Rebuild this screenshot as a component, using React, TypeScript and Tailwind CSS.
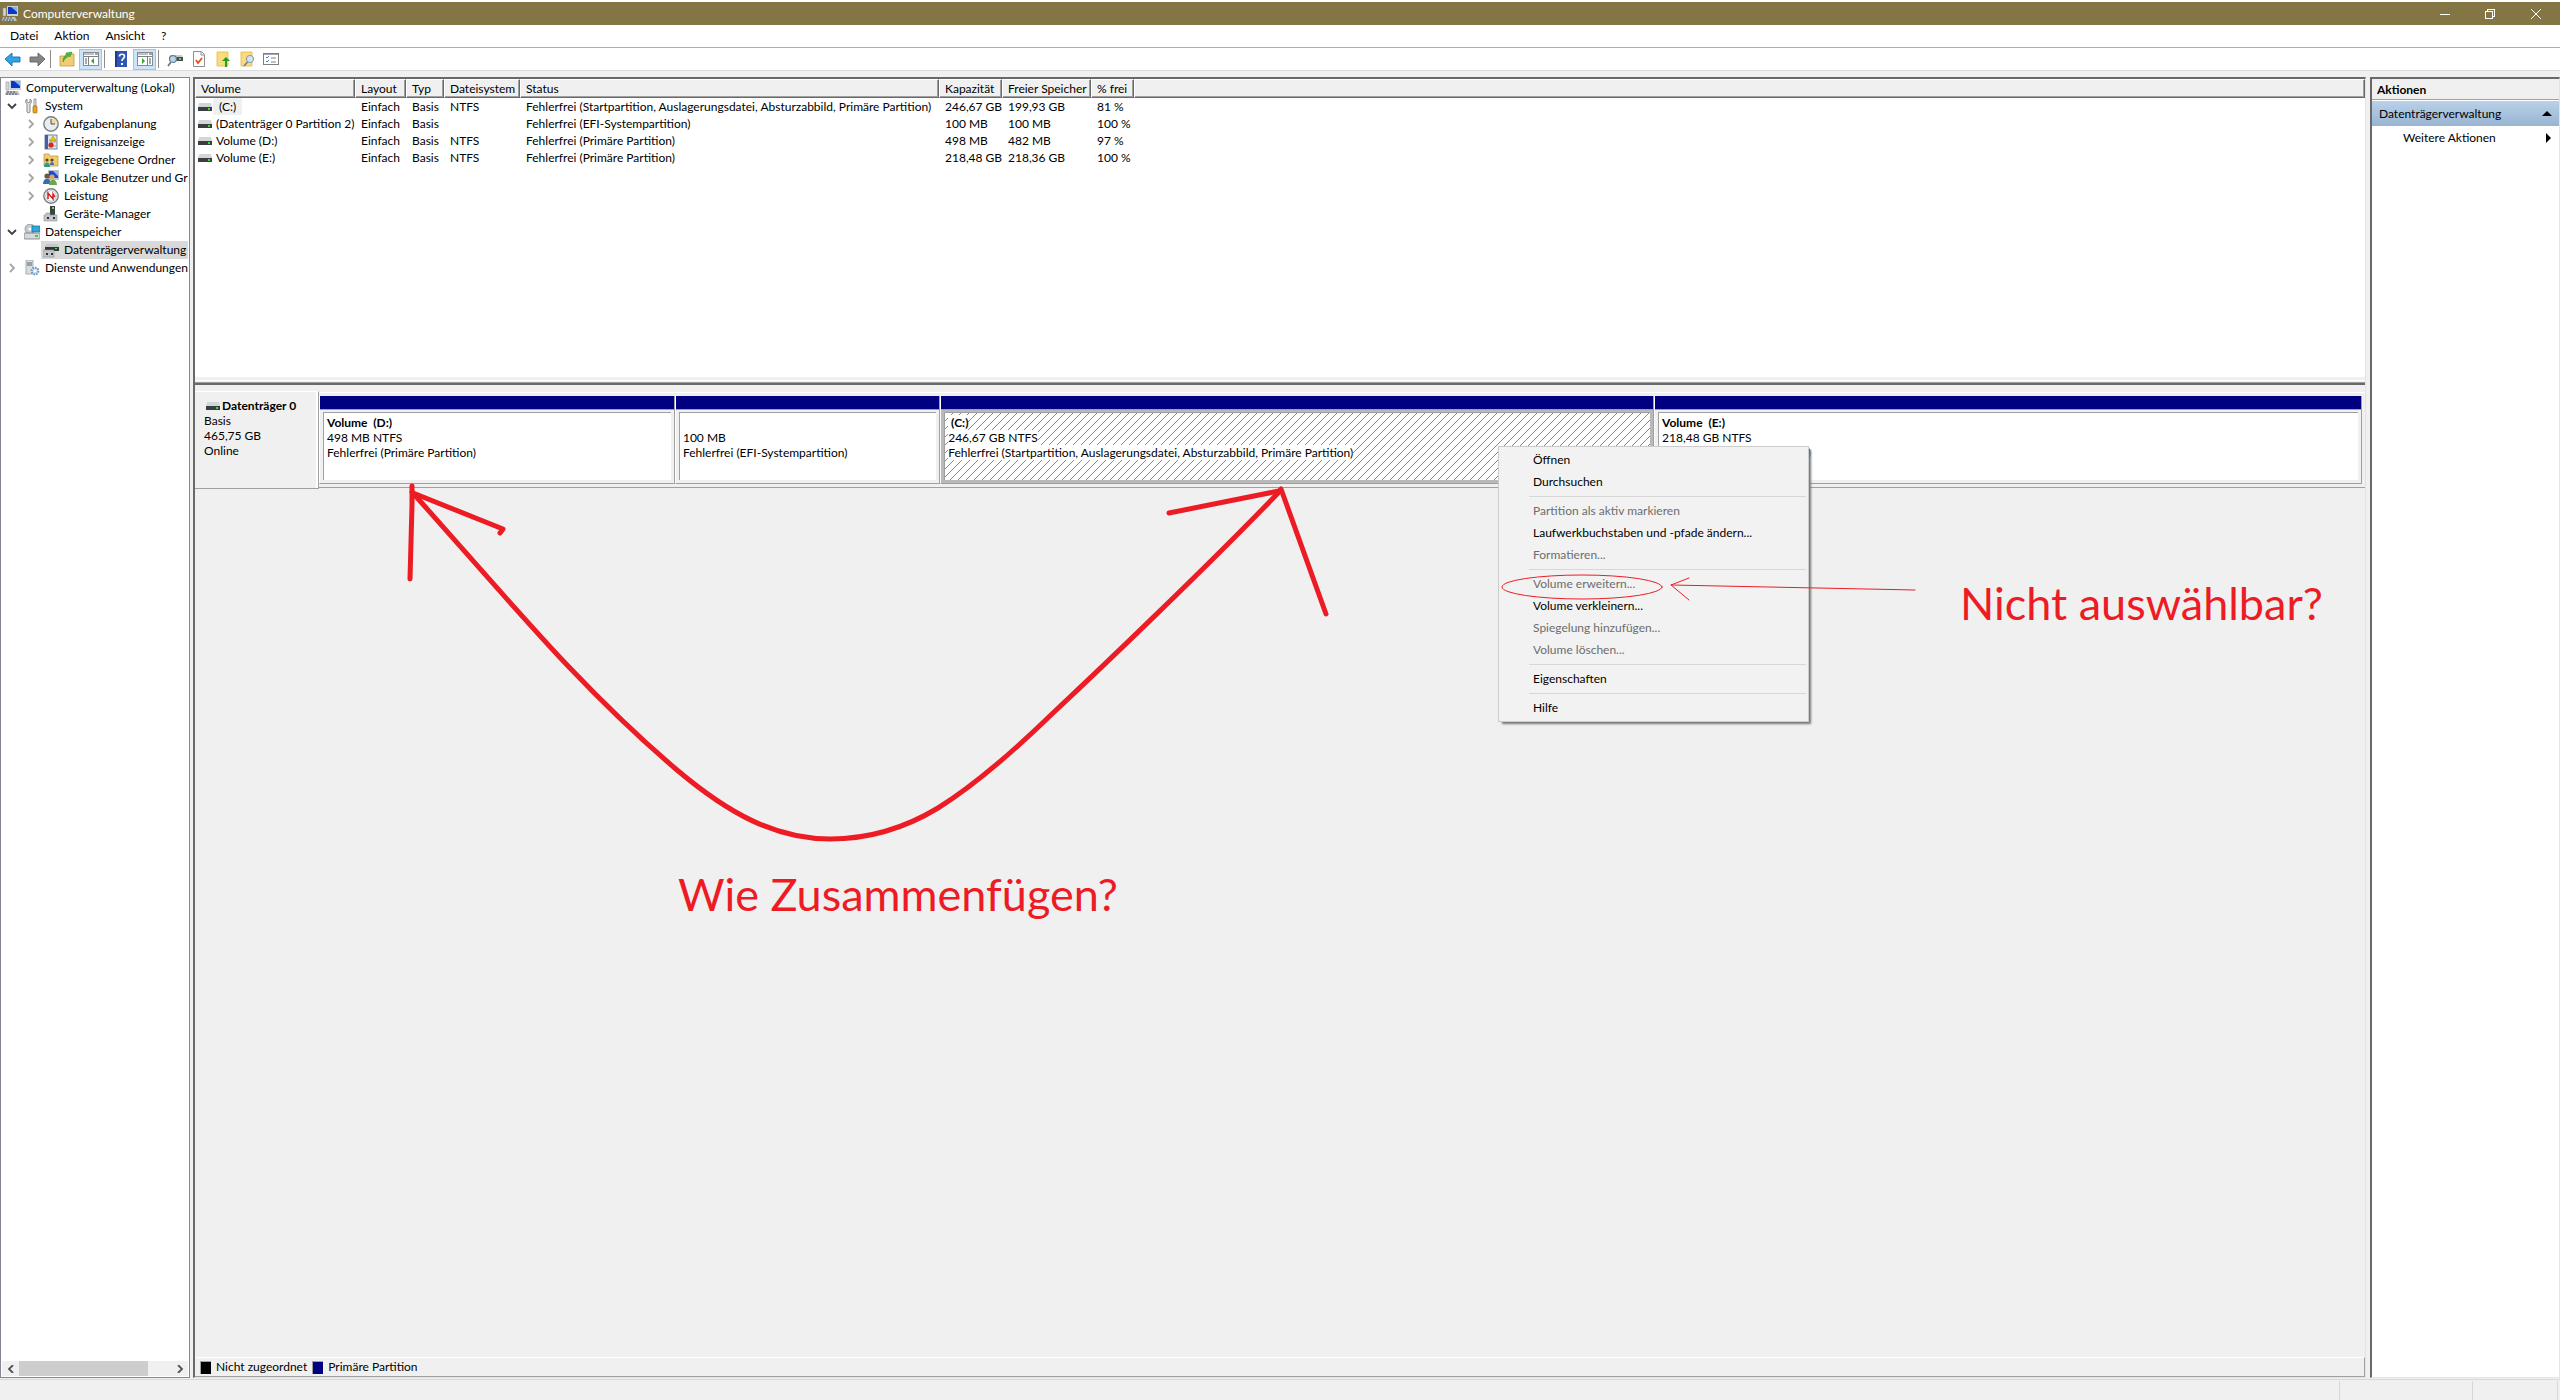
import React from "react";

type IconName =
  | "computer"
  | "tools"
  | "clock"
  | "events"
  | "share"
  | "users"
  | "perf"
  | "device"
  | "storage"
  | "disk"
  | "services";

interface TreeItem {
  label: string;
  icon: IconName;
  level: number;
  state?: "open" | "closed";
  selected?: boolean;
}

interface Volume {
  name: string;
  fs: string;
  status: string;
  capacity: string;
  free: string;
  percent: string;
  selected?: boolean;
}

interface Partition {
  name: string;
  size: string;
  status: string;
  grow: number;
  selected?: boolean;
}

const treeItems: TreeItem[] = [
  { label: "Computerverwaltung (Lokal)", icon: "computer", level: 0 },
  { label: "System", icon: "tools", level: 1, state: "open" },
  { label: "Aufgabenplanung", icon: "clock", level: 2, state: "closed" },
  { label: "Ereignisanzeige", icon: "events", level: 2, state: "closed" },
  { label: "Freigegebene Ordner", icon: "share", level: 2, state: "closed" },
  { label: "Lokale Benutzer und Gruppen", icon: "users", level: 2, state: "closed" },
  { label: "Leistung", icon: "perf", level: 2, state: "closed" },
  { label: "Geräte-Manager", icon: "device", level: 2 },
  { label: "Datenspeicher", icon: "storage", level: 1, state: "open" },
  { label: "Datenträgerverwaltung", icon: "disk", level: 2, selected: true },
  { label: "Dienste und Anwendungen", icon: "services", level: 1, state: "closed" },
];

const volumes: Volume[] = [
  {
    name: "(C:)",
    fs: "NTFS",
    status: "Fehlerfrei (Startpartition, Auslagerungsdatei, Absturzabbild, Primäre Partition)",
    capacity: "246,67 GB",
    free: "199,93 GB",
    percent: "81 %",
    selected: true,
  },
  {
    name: "(Datenträger 0 Partition 2)",
    fs: "",
    status: "Fehlerfrei (EFI-Systempartition)",
    capacity: "100 MB",
    free: "100 MB",
    percent: "100 %",
  },
  {
    name: "Volume (D:)",
    fs: "NTFS",
    status: "Fehlerfrei (Primäre Partition)",
    capacity: "498 MB",
    free: "482 MB",
    percent: "97 %",
  },
  {
    name: "Volume (E:)",
    fs: "NTFS",
    status: "Fehlerfrei (Primäre Partition)",
    capacity: "218,48 GB",
    free: "218,36 GB",
    percent: "100 %",
  },
];

const partitions: Partition[] = [
  { name: "Volume  (D:)", size: "498 MB NTFS", status: "Fehlerfrei (Primäre Partition)", grow: 355 },
  { name: "", size: "100 MB", status: "Fehlerfrei (EFI-Systempartition)", grow: 264 },
  {
    name: " (C:)",
    size: "246,67 GB NTFS",
    status: "Fehlerfrei (Startpartition, Auslagerungsdatei, Absturzabbild, Primäre Partition)",
    grow: 714,
    selected: true,
  },
  { name: "Volume  (E:)", size: "218,48 GB NTFS", status: "Fehlerfrei (Primäre Partition)", grow: 708 },
];

const menuGroups: { label: string; disabled?: boolean }[][] = [
  [{ label: "Öffnen" }, { label: "Durchsuchen" }],
  [
    { label: "Partition als aktiv markieren", disabled: true },
    { label: "Laufwerkbuchstaben und -pfade ändern..." },
    { label: "Formatieren...", disabled: true },
  ],
  [
    { label: "Volume erweitern...", disabled: true },
    { label: "Volume verkleinern..." },
    { label: "Spiegelung hinzufügen...", disabled: true },
    { label: "Volume löschen...", disabled: true },
  ],
  [{ label: "Eigenschaften" }],
  [{ label: "Hilfe" }],
];

const columns = [
  { label: "Volume", width: "w-[160px]" },
  { label: "Layout", width: "w-[51px]" },
  { label: "Typ", width: "w-[38px]" },
  { label: "Dateisystem", width: "w-[76px]" },
  { label: "Status", width: "w-[419px]" },
  { label: "Kapazität", width: "w-[63px]" },
  { label: "Freier Speicher", width: "w-[89px]" },
  { label: "% frei", width: "w-[43px]" },
  { label: "", width: "" },
];

const iconShapes: Record<IconName, React.ReactNode> = {
  computer: (
    <>
      <rect x="5" y="0" width="11" height="10" fill="#c9d0d6" />
      <rect x="6" y="1" width="9" height="7" fill="#0b35c4" />
      <path d="M9 1h6v5z" fill="#7fb2f5" />
      <rect x="1" y="2" width="3" height="8" fill="#d4d8da" stroke="#8d9499" strokeWidth=".6" />
      <path d="M1 11h12l2 4H0z" fill="#b9bfc3" />
      <path d="M2 12h2m1 0h2m1 0h2M1 14h2m1 0h2m1 0h2m1 0h2" stroke="#4b5358" />
    </>
  ),
  tools: (
    <>
      <path d="M3 1v3l2 1 1-1V1c2 1 2 4 0 5v8c0 1-3 1-3 0V6C1 5 1 2 3 1z" fill="#e4e6e8" stroke="#6a7075" strokeWidth=".8" />
      <path d="M10 1h2v7h-2z" fill="#dfe2e4" stroke="#7a7f84" strokeWidth=".7" />
      <rect x="9" y="8" width="4" height="7" rx="1" fill="#e9a41c" stroke="#9c6b08" strokeWidth=".7" />
    </>
  ),
  clock: (
    <>
      <circle cx="8" cy="8" r="7.2" fill="#e9edf0" stroke="#777d82" strokeWidth="1.4" />
      <path d="M8 8V2a6 6 0 0 1 6 6z" fill="#f6d9a3" />
      <path d="M8 3v5h4" fill="none" stroke="#4b4f53" />
    </>
  ),
  events: (
    <>
      <rect x="2" y="1" width="12" height="14" fill="#dbe6f3" stroke="#5a6c86" strokeWidth=".8" />
      <rect x="2" y="1" width="3" height="14" fill="#4560a0" />
      <path d="M6 6h7M6 8h7M6 12h7" stroke="#8397b5" strokeWidth=".8" />
      <path d="M10 2l3 5H7z" fill="#f5c400" stroke="#a88300" strokeWidth=".5" />
      <circle cx="8" cy="11" r="2.6" fill="#d8281e" />
    </>
  ),
  share: (
    <>
      <path d="M1 2h5l1 2h8v10H1z" fill="#f2cd6c" stroke="#bb9434" strokeWidth=".7" />
      <circle cx="4" cy="8" r="1.6" fill="#5b4228" />
      <path d="M1 15c0-6 6-6 6 0z" fill="#2c9c8b" />
      <circle cx="9" cy="8" r="1.6" fill="#5b4228" />
      <path d="M7 13c0-4 4-4 4 0z" fill="#3f6fc0" />
    </>
  ),
  users: (
    <>
      <rect x="5" y="0" width="11" height="10" fill="#bcc6cf" />
      <rect x="6" y="1" width="9" height="7" fill="#2149c9" />
      <path d="M10 1h5v5z" fill="#8fbaf5" />
      <circle cx="4" cy="6" r="2.6" fill="#6b5a3a" />
      <circle cx="9" cy="7" r="2.6" fill="#d9a868" />
      <path d="M0 14c0-7 8-7 8 0z" fill="#356cb2" />
      <path d="M6 15c0-7 8-7 8 0z" fill="#6aa84f" />
    </>
  ),
  perf: (
    <>
      <circle cx="8" cy="8" r="7.2" fill="#fff" stroke="#777d82" strokeWidth="1.4" />
      <circle cx="8" cy="8" r="5.3" fill="none" stroke="#b9bec2" />
      <path d="M5 11V5l5 6V6l2 3" fill="none" stroke="#d01f1f" strokeWidth="1.5" />
    </>
  ),
  device: (
    <>
      <rect x="7" y="0" width="5" height="9" fill="#3c4043" />
      <rect x="9" y="1" width="2" height="2" fill="#5ce04f" />
      <path d="M3 7h4v2h7v6H1V9h2z" fill="#bfc4c8" stroke="#8b9195" strokeWidth=".6" />
      <path d="M4 12h2m4 0h2" stroke="#2e3235" strokeWidth="2" />
    </>
  ),
  storage: (
    <>
      <circle cx="6" cy="5" r="5" fill="#c5cacf" stroke="#80878d" strokeWidth=".7" />
      <circle cx="6" cy="5" r="1.5" fill="#fff" />
      <rect x="8" y="2" width="8" height="6" fill="#2fa7de" stroke="#176d98" strokeWidth=".7" />
      <rect x="0" y="9" width="16" height="6" rx="1" fill="#d7dadc" stroke="#72777b" strokeWidth=".8" />
      <rect x="11" y="11" width="3" height="2" fill="#3dcf38" />
    </>
  ),
  disk: (
    <>
      <path d="M3 2h12l1 3H2z" fill="#c4c8cb" />
      <rect x="2" y="5" width="14" height="4" fill="#323537" />
      <rect x="12" y="6" width="2" height="1" fill="#4fe342" />
      <path d="M0 8h11v7H0z" fill="#c0c5c9" stroke="#8b9195" strokeWidth=".6" />
      <path d="M3 12h2m3 0h2" stroke="#2e3235" strokeWidth="2" />
    </>
  ),
  services: (
    <>
      <rect x="2" y="0" width="7" height="14" fill="#d8dde1" stroke="#8c949a" strokeWidth=".7" />
      <path d="M3 3h5M3 5h5" stroke="#59636b" />
      <circle cx="11" cy="11" r="3.4" fill="#c6ddf2" stroke="#6a9ac6" strokeWidth="2" strokeDasharray="1.6 1" />
      <circle cx="11" cy="11" r="1.2" fill="#fff" />
    </>
  ),
};

const Icon: React.FC<{ name: IconName }> = ({ name }) => (
  <svg viewBox="0 0 16 16" className="h-4 w-4 shrink-0" aria-hidden="true">
    {iconShapes[name]}
  </svg>
);

const DriveIcon: React.FC = () => (
  <svg viewBox="0 0 14 8" className="h-2 w-[14px] shrink-0" aria-hidden="true">
    <path d="M1 0h12l1 4H0z" fill="#d3d6d9" />
    <rect y="4" width="14" height="4" fill="#3b3e40" />
    <rect x="10" y="5" width="2" height="2" fill="#35e02c" />
  </svg>
);

const Chevron: React.FC<{ open: boolean }> = ({ open }) => (
  <svg viewBox="0 0 10 10" className="h-[10px] w-[10px]" aria-hidden="true">
    {open ? (
      <path d="M1 3l4 4 4-4" fill="none" stroke="#404040" strokeWidth="1.8" />
    ) : (
      <path d="M3 1l4 4-4 4" fill="none" stroke="#a6a6a6" strokeWidth="1.8" />
    )}
  </svg>
);

const TitleBar: React.FC = () => (
  <header className="flex h-[25px] shrink-0 items-center border-t-2 border-white bg-[#847545] pr-px text-white">
    <span className="flex items-center gap-[5px] pl-[2px]">
      <Icon name="computer" />
      <span className="leading-4">Computerverwaltung</span>
    </span>
    <div className="ml-auto flex h-full">
      <button aria-label="Minimieren" className="flex w-[45px] items-center justify-center">
        <svg viewBox="0 0 10 10" className="h-[10px] w-[10px]" shapeRendering="crispEdges">
          <path d="M0 5.5h10" stroke="#fff" />
        </svg>
      </button>
      <button aria-label="Wiederherstellen" className="flex w-[45px] items-center justify-center">
        <svg viewBox="0 0 10 10" className="h-[10px] w-[10px]" shapeRendering="crispEdges">
          <path d="M.5 2.5h7v7h-7zM2.5 2.5v-2h7v7h-2" fill="none" stroke="#fff" />
        </svg>
      </button>
      <button aria-label="Schließen" className="flex w-[47px] items-center justify-center">
        <svg viewBox="0 0 10 10" className="h-[10px] w-[10px]">
          <path d="M0 0l10 10M10 0L0 10" stroke="#fff" />
        </svg>
      </button>
    </div>
  </header>
);

const MenuBar: React.FC = () => (
  <nav className="flex h-[23px] shrink-0 items-center gap-4 border-b border-[#adadad] bg-white pl-[10px]">
    {["Datei", "Aktion", "Ansicht", "?"].map((item) => (
      <button key={item} className="leading-4">
        {item}
      </button>
    ))}
  </nav>
);

interface ToolProps {
  label: string;
  pressed?: boolean;
  children: React.ReactNode;
}

const Tool: React.FC<ToolProps> = ({ label, pressed, children }) => (
  <button
    aria-label={label}
    aria-pressed={pressed}
    className={
      pressed
        ? "flex h-[21px] w-[23px] items-center justify-center border border-[#92c8f5] bg-[#cce4f9]"
        : "flex h-[21px] w-[23px] items-center justify-center"
    }
  >
    <svg viewBox="0 0 16 16" className="h-4 w-4">
      {children}
    </svg>
  </button>
);

const Separator: React.FC = () => <div className="mr-[3px] ml-px h-[18px] w-px bg-[#8c8c8c]" />;

const PaneGlyph: React.FC<{ right?: boolean }> = ({ right }) => (
  <>
    <rect x=".5" y="1.5" width="15" height="13" fill="#fff" stroke="#8a8d90" />
    <path d="M1 3h10M1 5.5h14" stroke="#7c8084" />
    <path d="M12 3h3" stroke="#4a4d50" />
    {right ? (
      <>
        <path d="M10.5 6v8" stroke="#7c8084" />
        <path d="M12 8h2M12 10h2M12 12h2" stroke="#55585b" />
        <path d="M5 7l3 3-3 3z" fill="#39a52f" />
      </>
    ) : (
      <>
        <path d="M5.5 6v8" stroke="#7c8084" />
        <path d="M2 8h2M2 10h2M2 12h2" stroke="#55585b" />
        <path d="M11 7l-3 3 3 3z" fill="#39a52f" />
      </>
    )}
  </>
);

const ToolBar: React.FC = () => (
  <div className="flex h-[23px] shrink-0 items-center gap-px border-b border-[#dcdcdc] bg-white pl-px">
    <Tool label="Zurück">
      <path d="M0 8l7-6v4h8v5H7v4z" fill="#2ea3e6" stroke="#1b6fae" strokeWidth=".9" />
    </Tool>
    <Tool label="Vorwärts">
      <path d="M16 8L9 2v4H1v5h8v4z" fill="#858585" stroke="#636363" strokeWidth=".9" />
    </Tool>
    <Separator />
    <Tool label="Eine Ebene nach oben">
      <path d="M1 5h5l1-2h8v12H1z" fill="#f0cd73" stroke="#c09a3e" strokeWidth=".8" />
      <path d="M4 11c0-4 1-6 4-7L7 2l6-1-2 5-1-1c-2 1-4 2-6 6z" fill="#4cba3c" stroke="#2d8426" strokeWidth=".5" />
    </Tool>
    <Tool label="Konsolenstruktur anzeigen" pressed>
      <PaneGlyph />
    </Tool>
    <Separator />
    <Tool label="Hilfe">
      <rect x="2" y="0" width="12" height="16" fill="#2f55b8" />
      <rect x="2" y="0" width="2" height="16" fill="#1f3c8c" />
      <path d="M6.5 5.5c0-3 5-3 5 0 0 2-2.500 2-2.500 4.500" fill="none" stroke="#fff" strokeWidth="1.7" />
      <rect x="8" y="12" width="2" height="2" fill="#fff" />
    </Tool>
    <Tool label="Aktionsbereich anzeigen" pressed>
      <PaneGlyph right />
    </Tool>
    <Separator />
    <Tool label="Neu einlesen">
      <path d="M3 4h12l1 3H2z" fill="#c8ccd0" />
      <rect x="2" y="6" width="14" height="4" fill="#484c4f" />
      <rect x="12" y="7" width="2" height="2" fill="#4be03f" />
      <circle cx="6" cy="8" r="3.4" fill="#b5d6ef" stroke="#6c7a86" strokeWidth="1.1" />
      <path d="M4 11l-3 4" stroke="#6c7a86" strokeWidth="1.8" />
    </Tool>
    <Tool label="Eigenschaften">
      <path d="M2.5.5h8l3 3v12h-11z" fill="#fff" stroke="#8b8f92" />
      <path d="M10 1v3h3" fill="none" stroke="#8b8f92" />
      <path d="M5 9l2 3 4-5" fill="none" stroke="#e3501c" strokeWidth="1.8" />
    </Tool>
    <Tool label="Volume hinzufügen">
      <path d="M2 1h11v14H2z" fill="#fbdc7b" stroke="#e0b954" strokeWidth=".8" />
      <path d="M11 6l4 4h-3v6h-2v-6H7z" fill="#21a321" />
    </Tool>
    <Tool label="Suchen">
      <path d="M2 1h11v14H2z" fill="#fbdc7b" stroke="#e0b954" strokeWidth=".8" />
      <circle cx="11" cy="8" r="3.6" fill="#cfe4f4" stroke="#8896a3" />
      <path d="M8.5 11L5 15" stroke="#718090" strokeWidth="1.6" />
    </Tool>
    <Tool label="Liste">
      <rect x=".5" y="2.5" width="15" height="11" fill="#fff" stroke="#7c8084" />
      <path d="M1 3.5h14" stroke="#a6aaad" />
      <path d="M3 6l1 1 2-2M3 10l1 1 2-2" fill="none" stroke="#3b82d1" />
      <path d="M8 7h5M8 11h5" stroke="#7c8084" />
    </Tool>
  </div>
);

const Tree: React.FC = () => (
  <aside className="flex w-[190px] shrink-0 flex-col border border-[#828790] bg-white p-px">
    <ul className="min-h-0 flex-1 overflow-hidden">
      {treeItems.map((item) => (
        <li
          key={item.label}
          className={
            item.level === 0 ? "flex h-[18px] pl-px" : item.level === 1 ? "flex h-[18px] pl-[4px]" : "flex h-[18px] pl-[23px]"
          }
        >
          {item.level > 0 && (
            <span className="flex w-[16px] shrink-0 items-center pl-px">
              {item.state && <Chevron open={item.state === "open"} />}
            </span>
          )}
          <button
            className={
              item.selected
                ? "flex flex-1 items-center gap-[5px] bg-[#d9d9d9] pl-[2px] leading-4 whitespace-nowrap"
                : "flex items-center gap-[5px] pl-[2px] leading-4 whitespace-nowrap"
            }
          >
            <Icon name={item.icon} />
            {item.label}
          </button>
        </li>
      ))}
    </ul>
    <div className="flex h-[15px] items-center bg-[#f0f0f0]">
      <button aria-label="Nach links" className="flex w-[17px] justify-center">
        <svg viewBox="0 0 8 8" className="h-2 w-2">
          <path d="M6 0L2 4l4 4" fill="none" stroke="#505050" strokeWidth="1.8" />
        </svg>
      </button>
      <div className="flex h-full flex-1">
        <div className="h-full w-[129px] bg-[#cdcdcd]" />
      </div>
      <button aria-label="Nach rechts" className="flex w-[17px] justify-center">
        <svg viewBox="0 0 8 8" className="h-2 w-2">
          <path d="M2 0l4 4-4 4" fill="none" stroke="#505050" strokeWidth="1.8" />
        </svg>
      </button>
    </div>
  </aside>
);

const VolumeTable: React.FC = () => (
  <div className="h-[298px] shrink-0 overflow-hidden bg-white">
    <table className="w-full table-fixed border-separate border-spacing-0 text-left whitespace-nowrap">
      <thead>
        <tr>
          {columns.map((col) => (
            <th
              key={col.label}
              className={`${col.width} h-[19px] border-t border-r border-b border-l border-t-white border-r-[#696969] border-b-[#696969] border-l-white bg-[#f0f0f0] p-0 pl-[5px] leading-4 font-normal shadow-[inset_-1px_-1px_#a0a0a0]`}
            >
              {col.label}
            </th>
          ))}
        </tr>
      </thead>
      <tbody>
        {volumes.map((vol) => (
          <tr key={vol.name} className="h-[17px]">
            <td className="p-0 pl-[3px]">
              <span className="flex items-center">
                <DriveIcon />
                <span className={vol.selected ? "ml-px bg-[#f0f0f0] px-[6px] leading-[17px]" : "ml-[4px] leading-[17px]"}>
                  {vol.name}
                </span>
              </span>
            </td>
            <td className="p-0 pl-[6px] leading-[17px]">Einfach</td>
            <td className="p-0 pl-[6px] leading-[17px]">Basis</td>
            <td className="p-0 pl-[6px] leading-[17px]">{vol.fs}</td>
            <td className="p-0 pl-[6px] leading-[17px]">{vol.status}</td>
            <td className="p-0 pl-[6px] leading-[17px]">{vol.capacity}</td>
            <td className="p-0 pl-[6px] leading-[17px]">{vol.free}</td>
            <td className="p-0 pl-[6px] leading-[17px]">{vol.percent}</td>
            <td className="p-0" />
          </tr>
        ))}
      </tbody>
    </table>
  </div>
);

const PartitionBox: React.FC<{ part: Partition }> = ({ part }) => (
  <div
    className="min-w-0 basis-0 border-r border-b border-l border-r-[#a0a0a0] border-b-[#a0a0a0] border-l-white"
    style={{ flexGrow: part.grow }}
  >
    <div className="h-[13px] bg-[#000080]" />
    <div
      className={
        part.selected
          ? "border-t border-[#a0a0a0] bg-[#b9b9b9] px-[3px] pt-[2px] pb-[3px]"
          : "border-t border-[#a0a0a0] px-[3px] pt-[2px] pb-[3px]"
      }
    >
      <div className="relative h-[68px] overflow-hidden border-t border-l border-[#a0a0a0] bg-white pt-[2px] pl-[3px] leading-[15px] whitespace-pre">
        {part.selected && (
          <svg className="absolute inset-0 h-full w-full" shapeRendering="crispEdges" aria-hidden="true">
            <defs>
              <pattern id="hatch" width="8" height="8" patternUnits="userSpaceOnUse">
                <path d="M-1 9L9-1" stroke="#8a8a8a" />
              </pattern>
            </defs>
            <rect width="100%" height="100%" fill="url(#hatch)" />
          </svg>
        )}
        <div className="relative flex flex-col items-start">
          <span className="h-[15px] bg-white font-bold">{part.name}</span>
          <span className="bg-white">{part.size}</span>
          <span className="bg-white">{part.status}</span>
        </div>
      </div>
    </div>
  </div>
);

const DiskView: React.FC = () => (
  <div className="flex shrink-0 pt-[6px]">
    <section className="h-[98px] w-[124px] shrink-0 border-t border-r border-b border-t-white border-r-[#a0a0a0] border-b-[#a0a0a0] pt-[6px] pl-[9px] leading-[15px] shadow-[inset_-2px_0_#fff]">
      <h2 className="flex items-center gap-[2px] pl-[2px] font-bold">
        <DriveIcon />
        Datenträger 0
      </h2>
      <p>Basis</p>
      <p>465,75 GB</p>
      <p>Online</p>
    </section>
    <div className="mt-px flex h-[96px] min-w-0 flex-1 border-t border-b border-t-white border-b-[#a0a0a0] pt-[3px] pr-[3px] pb-[3px]">
      {partitions.map((part) => (
        <PartitionBox key={part.size} part={part} />
      ))}
    </div>
  </div>
);

const Legend: React.FC = () => (
  <footer className="mt-auto flex h-[20px] items-center border-t border-r border-b border-t-white border-r-[#a0a0a0] border-b-[#a0a0a0] pl-[5px] leading-4">
    <span className="h-[13px] w-[11px] border-t border-l border-[#a0a0a0] bg-black" />
    <span className="ml-[5px]">Nicht zugeordnet</span>
    <span className="ml-[5px] h-[13px] w-[11px] border-t border-l border-[#a0a0a0] bg-[#000080]" />
    <span className="ml-[5px]">Primäre Partition</span>
  </footer>
);

const ActionsPane: React.FC = () => (
  <aside className="w-[190px] shrink-0 border-t-2 border-r border-b border-l-2 border-t-[#696969] border-r-[#e3e3e3] border-b-[#e3e3e3] border-l-[#696969] bg-white">
    <h2 className="mb-px h-[21px] border-b border-[#a0a0a0] bg-[#f0f0f0] pl-[5px] leading-[22px] font-bold">Aktionen</h2>
    <button className="flex h-[25px] w-full items-center bg-gradient-to-b from-[#b9d1ea] to-[#99b4d1] px-[7px] leading-4">
      Datenträgerverwaltung
      <svg viewBox="0 0 10 5" className="ml-auto h-[5px] w-[10px]">
        <path d="M5 0l5 5H0z" />
      </svg>
    </button>
    <button className="flex h-[24px] w-full items-center pr-[8px] pl-[31px] leading-4">
      Weitere Aktionen
      <svg viewBox="0 0 5 10" className="ml-auto h-[10px] w-[5px]">
        <path d="M0 0l5 5-5 5z" />
      </svg>
    </button>
  </aside>
);

const ContextMenu: React.FC = () => (
  <div
    role="menu"
    className="absolute top-[446px] left-[1498px] w-[311px] border border-[#cccccc] bg-[#f2f2f2] p-[2px] shadow-[3px_3px_2px_-1px_#777]"
  >
    {menuGroups.map((group, index) => (
      <div key={group[0].label}>
        {index > 0 && <div className="my-[3px] ml-[28px] h-px bg-[#d7d7d7]" />}
        {group.map((item) => (
          <button
            key={item.label}
            role="menuitem"
            disabled={item.disabled}
            className="block h-[22px] w-full pl-[32px] text-left leading-[22px] disabled:text-[#6d6d6d]"
          >
            {item.label}
          </button>
        ))}
      </div>
    ))}
  </div>
);

// Hand-drawn notes on top of the window
const Annotations: React.FC = () => (
  <div className="pointer-events-none absolute inset-0 overflow-hidden text-[#ed1c24]">
    <svg
      className="absolute top-0 left-0 h-[1400px] w-[2560px]"
      fill="none"
      stroke="#ed1c24"
      strokeLinecap="round"
      strokeLinejoin="round"
    >
      <g strokeWidth="5">
        <path d="M412 486L412 505 410 579" />
        <path d="M413 493L503 529 500 533" />
        <path d="M412 492C464 550 525 621 569 667C608 708 637 736 677 770C728 813 775 839 830 839C870 839 905 828 938 808C978 783 1018 747 1053 713C1100 669 1210 564 1280 491" />
        <path d="M1169 513L1279 491 1281 489 1326 614" />
      </g>
      <ellipse cx="1582" cy="587" rx="80" ry="12" />
      <path d="M1915 590L1671 585M1689 578l-18 7 18 15" />
    </svg>
    <p className="absolute top-[870px] left-[678px] text-[45px] leading-[48px] whitespace-nowrap">Wie Zusammenfügen?</p>
    <p className="absolute top-[579px] left-[1960px] text-[45px] leading-[48px] whitespace-nowrap">Nicht auswählbar?</p>
  </div>
);

const App: React.FC = () => {
  return (
    <div className="relative flex h-screen flex-col overflow-hidden bg-[#f0f0f0] font-['Lato','Open_Sans',sans-serif] text-[12px] text-black">
      <TitleBar />
      <MenuBar />
      <ToolBar />
      <main className="flex min-h-0 flex-1 pt-[6px]">
        <Tree />
        <section className="ml-[3px] flex min-w-0 flex-1 flex-col border-t-2 border-r border-b border-l-2 border-t-[#696969] border-r-[#e3e3e3] border-b-[#e3e3e3] border-l-[#696969]">
          <VolumeTable />
          <div className="h-[8px] shrink-0 border-b-2 border-[#696969] shadow-[inset_0_-1px_#a0a0a0,inset_0_3px_#f0f0f0,inset_0_4px_#fff]" />
          <DiskView />
          <Legend />
        </section>
        <div className="w-1 shrink-0 bg-[#f0f0f0]" />
        <ActionsPane />
      </main>
      <div className="mt-px flex h-[21px] shrink-0 justify-end border-t border-[#d7d7d7] pt-px pr-[2px]">
        <span className="w-[133px] border-l border-[#d7d7d7]" />
        <span className="w-[86px] border-r border-l border-[#d7d7d7]" />
      </div>
      <ContextMenu />
      <Annotations />
    </div>
  );
};

export default App;
